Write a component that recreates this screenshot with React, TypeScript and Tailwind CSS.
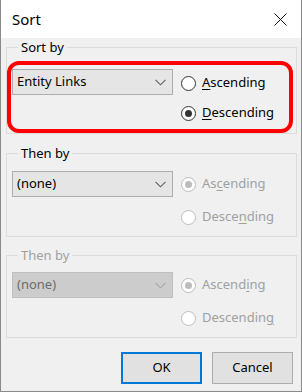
import React from "react";

const FONT = { fontFamily: '"Noto Sans", "Open Sans", sans-serif' };

function Chevron({ disabled }: { disabled?: boolean }) {
  return (
    <svg width="11" height="7" viewBox="0 0 11 7" className="shrink-0">
      <path
        d="M0.5 0.8 L5.5 5.8 L10.5 0.8"
        fill="none"
        stroke={disabled ? "#a8a8a8" : "#606060"}
        strokeWidth="1.1"
      />
    </svg>
  );
}

function Combo({ value, disabled }: { value: string; disabled?: boolean }) {
  return (
    <div
      className={
        "mt-[1px] flex h-[26px] w-[161px] shrink-0 items-center justify-between border pl-[4px] pr-[6px] text-[13px] " +
        (disabled
          ? "border-[#bfbfbf] bg-[#cccccc] text-[#6d6d6d]"
          : "border-[#adadad] bg-[#e5e5e5] text-black")
      }
    >
      <span>{value}</span>
      <Chevron disabled={disabled} />
    </div>
  );
}

function Radio({
  label,
  checked,
  disabled,
}: {
  label: React.ReactNode;
  checked?: boolean;
  disabled?: boolean;
}) {
  return (
    <div className="flex h-[28px] items-center gap-[6px]">
      <div
        className={
          "flex h-[15px] w-[15px] items-center justify-center rounded-full border bg-white " +
          (disabled ? "border-[#bcbcbc]" : "border-[#333333]")
        }
      >
        {checked && (
          <div
            className={
              "h-[7px] w-[7px] rounded-full " +
              (disabled ? "bg-[#bcbcbc]" : "bg-[#333333]")
            }
          />
        )}
      </div>
      <span
        className={
          "text-[13px] " + (disabled ? "text-[#a0a0a0]" : "text-black")
        }
      >
        {label}
      </span>
    </div>
  );
}

function U({ children }: { children: React.ReactNode }) {
  return (
    <span className="underline decoration-1 underline-offset-[2px]">
      {children}
    </span>
  );
}

export default function App() {
  return (
    <div
      className="relative flex h-[392px] w-[302px] flex-col border-x border-b border-[#8a8a8a] bg-[#f0f0f0]"
      style={FONT}
    >
      {/* Title bar */}
      <div className="flex h-[38px] shrink-0 items-center justify-between bg-white pl-[11px] pr-[14px]">
        <span className="text-[15px] text-black">Sort</span>
        <svg width="13" height="13" viewBox="0 0 13 13">
          <path d="M0.5 0.5 L12.5 12.5 M12.5 0.5 L0.5 12.5" stroke="#111" strokeWidth="1" />
        </svg>
      </div>

      <div className="flex flex-col pl-[5px] pr-[4px]">
        {/* Sort by */}
        <fieldset className="border border-[#dcdcdc] pb-[6px] pl-[5px]">
          <legend className="ml-[6px] px-[3px] text-[13px] leading-[18px] text-black">
            Sort by
          </legend>
          <div className="flex items-start gap-[8px] pt-[13px]">
            <div className="flex">
              <div className="-mt-[1px]">
                <Combo value="Entity Links" />
              </div>
            </div>
            <div className="-mt-[0px] flex flex-col gap-[2px]">
              <Radio label={<><U>A</U>scending</>} />
              <Radio label={<><U>D</U>escending</>} checked />
            </div>
          </div>
        </fieldset>

        {/* Then by */}
        <fieldset className="mt-[10px] border border-[#dcdcdc] pb-[5px] pl-[5px]">
          <legend className="ml-[6px] px-[3px] text-[13px] leading-[18px] text-black">
            Then by
          </legend>
          <div className="flex items-start gap-[8px] pt-[8px]">
            <Combo value="(none)" />
            <div className="flex flex-col gap-[5px]">
              <Radio label={<>As<U>c</U>ending</>} checked disabled />
              <Radio label={<>Desce<U>n</U>ding</>} disabled />
            </div>
          </div>
        </fieldset>

        {/* Then by (disabled) */}
        <fieldset className="mt-[9px] border border-[#dcdcdc] pb-[5px] pl-[5px]">
          <legend className="ml-[6px] px-[3px] text-[13px] leading-[18px] text-[#a0a0a0]">
            Then by
          </legend>
          <div className="flex items-start gap-[8px] pt-[7px]">
            <Combo value="(none)" disabled />
            <div className="flex flex-col gap-[5px]">
              <Radio label={<>Ascend<U>i</U>ng</>} checked disabled />
              <Radio label={<>Descendin<U>g</U></>} disabled />
            </div>
          </div>
        </fieldset>

        {/* Buttons */}
        <div className="mr-[4px] mt-[14px] flex justify-end gap-[10px]">
          <button className="flex h-[32px] w-[81px] items-center justify-center border-2 border-[#0078d7] bg-[#e1e1e1] text-[13px] text-black">
            OK
          </button>
          <button className="flex h-[32px] w-[81px] items-center justify-center border border-[#adadad] bg-[#e1e1e1] text-[13px] text-black">
            Cancel
          </button>
        </div>
      </div>

      {/* Red highlight annotation */}
      <div className="pointer-events-none absolute left-[6px] top-[61px] h-[72px] w-[286px] rounded-[12px] border-[4px] border-[#ff0000]" />
    </div>
  );
}
